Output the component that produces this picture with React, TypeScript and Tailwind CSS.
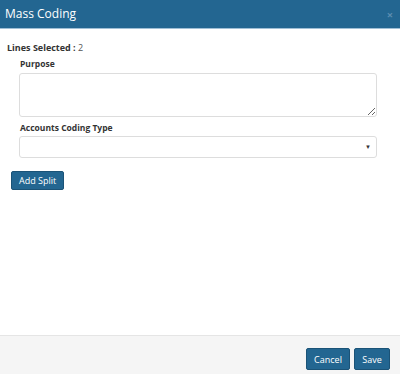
import React from 'react';

const App: React.FC = () => {
  return (
    <div
      className="w-[400px] h-[374px] flex flex-col bg-white text-[#333]"
      style={{ fontFamily: '"Open Sans", sans-serif' }}
    >
      {/* Header */}
      <div className="h-[29px] bg-[#236691] border-b border-[#9fbfd6] flex items-center justify-between pl-[5px] pr-[7px]">
        <span className="text-white text-[12px] leading-none">Mass Coding</span>
        <span className="text-[#5b8db0] text-[11px] font-bold leading-none">×</span>
      </div>

      {/* Body */}
      <div className="flex-1 px-[7px] pt-[13px]">
        <div className="text-[9px] leading-[12px]">
          <span className="font-bold">Lines Selected : </span>
          <span className="text-[#555]">2</span>
        </div>
        <div className="pl-[12px] pr-[16px] mt-[4px]">
          <label className="block text-[8.5px] font-bold leading-[12px] pl-[1px]">Purpose</label>
          <textarea className="block mt-[3px] w-full h-[44px] border border-[#ddd] rounded-[3px] resize-y outline-none" />
          <label className="block mt-[5px] text-[8.5px] font-bold leading-[12px] pl-[1px]">Accounts Coding Type</label>
          <div className="relative mt-[2px] h-[22px] border border-[#ddd] rounded-[3px]">
            <span className="absolute right-[5px] top-[6px] text-[6px] text-[#333]">▼</span>
          </div>
        </div>
        <button className="mt-[13px] ml-[4px] h-[19px] px-[7px] bg-[#236691] border border-[#1b5377] rounded-[2px] text-white text-[9px] leading-none">
          Add Split
        </button>
      </div>

      {/* Footer */}
      <div className="h-[39px] bg-[#f5f5f5] border-t border-[#e5e5e5] flex items-center justify-end gap-[4px] pr-[10px] pt-[8px]">
        <button className="h-[22px] w-[44px] bg-[#236691] border border-[#1b5377] rounded-[2px] text-white text-[9px] leading-none">
          Cancel
        </button>
        <button className="h-[22px] w-[36px] bg-[#236691] border border-[#1b5377] rounded-[2px] text-white text-[9px] leading-none">
          Save
        </button>
      </div>
    </div>
  );
};

export default App;
